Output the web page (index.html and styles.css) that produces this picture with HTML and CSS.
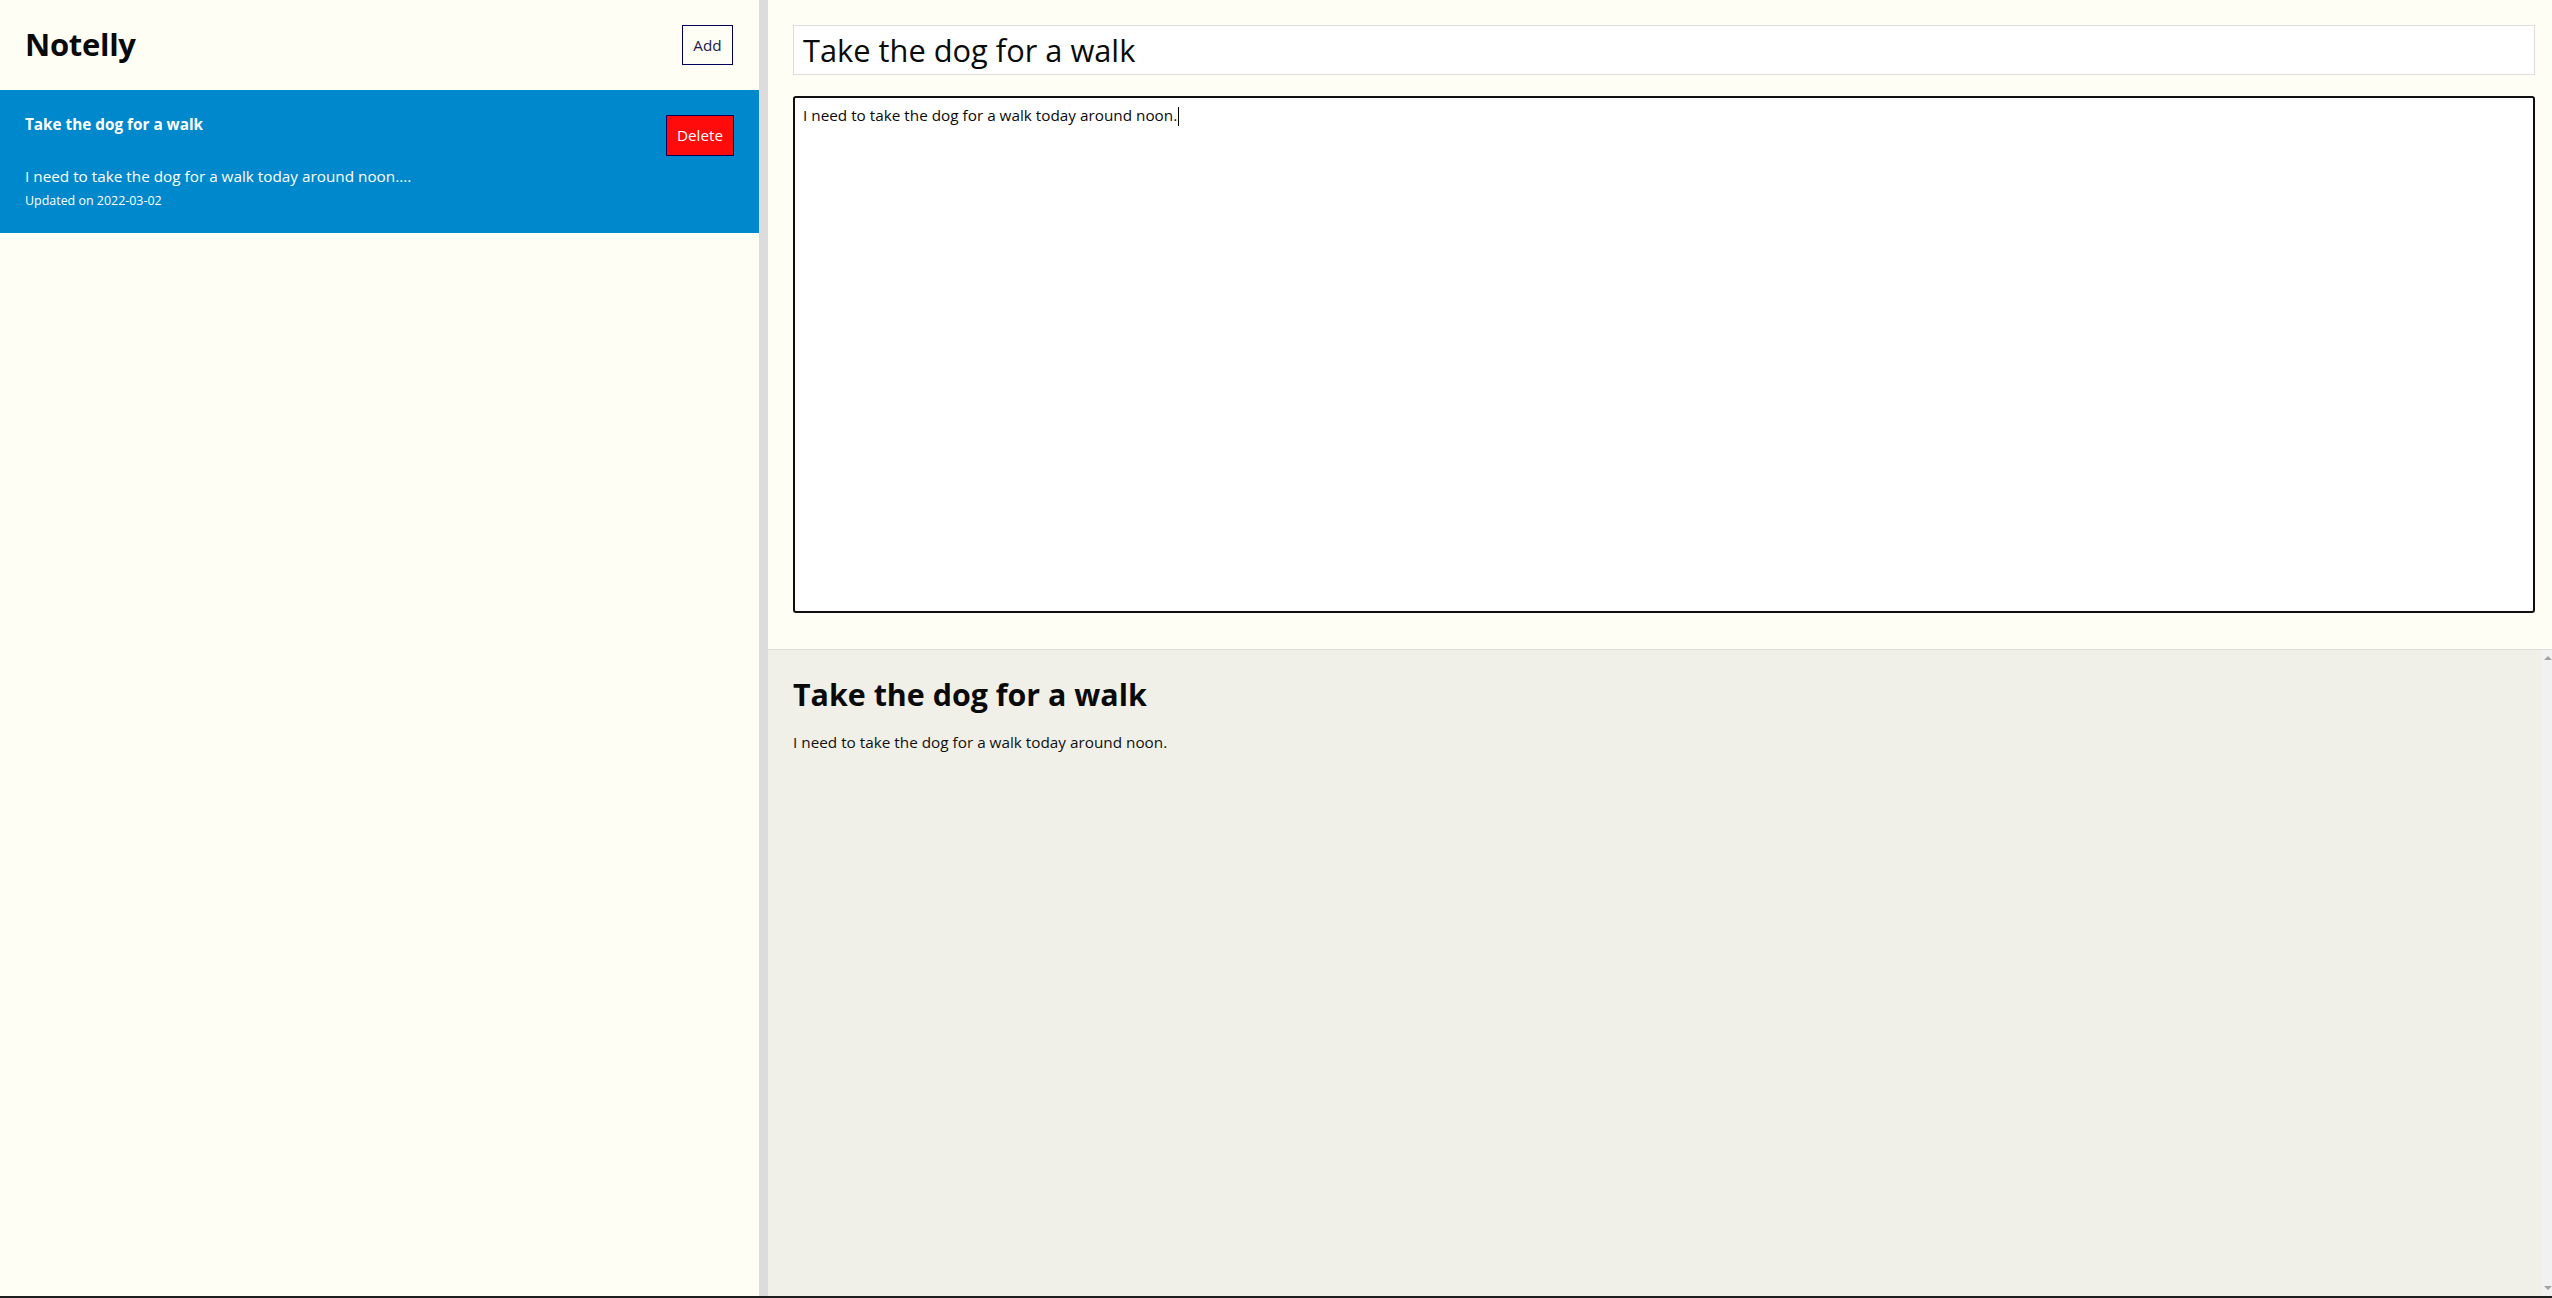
FILE: index.html
```html
<!DOCTYPE html>
<html lang="en">
<head>
<meta charset="utf-8">
<title>Notelly</title>
<link rel="stylesheet" href="styles.css">
</head>
<body>
<div class="app">
  <aside class="sidebar">
    <header class="sidebar-header">
      <h1 class="brand">Notelly</h1>
      <button class="btn btn-add">Add</button>
    </header>
    <div class="note note-active">
      <div class="note-top">
        <span class="note-title">Take the dog for a walk</span>
        <button class="btn btn-delete">Delete</button>
      </div>
      <p class="note-body">I need to take the dog for a walk today around noon....</p>
      <p class="note-meta">Updated on 2022-03-02</p>
    </div>
  </aside>
  <main class="main">
    <section class="editor">
      <div class="title-input">Take the dog for a walk</div>
      <div class="body-input">I need to take the dog for a walk today around noon.<span class="caret"></span></div>
    </section>
    <section class="preview">
      <div class="preview-content">
        <h1 class="preview-title">Take the dog for a walk</h1>
        <p class="preview-body">I need to take the dog for a walk today around noon.</p>
      </div>
      <div class="scrollbar">
        <span class="arrow arrow-up"></span>
        <span class="arrow arrow-down"></span>
      </div>
    </section>
  </main>
</div>
</body>
</html>
```
FILE: styles.css
```css
* { box-sizing: border-box; }
html, body { margin: 0; padding: 0; }
body {
  background: #1e1e1e;
  font-family: "Open Sans", "Noto Sans", sans-serif;
  color: #111;
}
.app {
  display: flex;
  height: 1296px;
  overflow: hidden;
}
.sidebar {
  width: 768px;
  flex: 0 0 768px;
  background: #fefef5;
  border-right: 9px solid #dcdcdc;
}
.sidebar-header {
  height: 90px;
  display: flex;
  align-items: center;
  justify-content: space-between;
  padding: 0 25px 0 25px;
}
.brand {
  margin: 0;
  font-size: 31px;
  font-weight: 700;
  line-height: 40px;
  color: #0a0a0a;
  letter-spacing: -0.3px;
  position: relative;
  top: -1px;
}
.btn {
  font-family: "Open Sans", "Noto Sans", sans-serif;
  font-size: 15.25px;
  line-height: 19px;
  padding: 10px 9px;
  border: 1px solid #000058;
  border-radius: 0;
  cursor: pointer;
}
.btn-add {
  background: #fefef5;
  color: #202050;
  width: 51px;
  height: 40px;
  margin-right: 1px;
}
.btn-delete {
  background: #ff0b0b;
  color: #fff;
  width: 68px;
  height: 41px;
  padding: 10px 0;
}
.note {
  padding: 25px 25px 24px 25px;
}
.note-active {
  background: #0088cc;
  color: #fff;
}
.note-top {
  display: flex;
  justify-content: space-between;
  align-items: flex-start;
}
.note-title {
  font-size: 15.3px;
  font-weight: 700;
  line-height: 18px;
}
.note-body {
  margin: 10px 0 0 0;
  font-size: 15.3px;
  line-height: 20px;
}
.note-meta {
  margin: 7px 0 0 0;
  font-size: 12.45px;
  line-height: 16px;
}
.main {
  flex: 1;
  display: flex;
  flex-direction: column;
  min-width: 0;
}
.editor {
  background: #fefef5;
  padding: 25px 17px 36px 25px;
  border-bottom: 1px solid #dddddd;
  height: 650px;
}
.title-input {
  height: 50px;
  background: #ffffff;
  border: 1px solid #dddddd;
  padding: 0 9px;
  font-size: 30.8px;
  line-height: 48px;
  color: #0a0a0a;
}
.body-input {
  margin-top: 21px;
  height: 517px;
  background: #ffffff;
  border: 2px solid #101010;
  border-radius: 3px;
  padding: 7px 8px;
  font-size: 15.3px;
  line-height: 20px;
  color: #0a0a0a;
}
.caret {
  display: inline-block;
  width: 1px;
  height: 19px;
  background: #000;
  vertical-align: -5px;
  margin-left: 1px;
}
.preview {
  flex: 1;
  display: flex;
  background: #f0efe8;
}
.preview-content {
  flex: 1;
  padding: 26px 25px;
}
.preview-title {
  margin: 0;
  font-size: 30.4px;
  font-weight: 700;
  line-height: 37px;
  color: #0a0a0a;
}
.preview-body {
  margin: 19px 0 0 0;
  font-size: 15.3px;
  line-height: 20px;
  color: #111;
}
.scrollbar {
  width: 10px;
  flex: 0 0 10px;
  background: #f1f1f1;
  position: relative;
}
.arrow {
  position: absolute;
  left: 2px;
  width: 0;
  height: 0;
  border-left: 4px solid transparent;
  border-right: 4px solid transparent;
}
.arrow-up {
  top: 6px;
  border-bottom: 4px solid #a3a3a3;
}
.arrow-down {
  bottom: 6px;
  border-top: 4px solid #a3a3a3;
}
```
